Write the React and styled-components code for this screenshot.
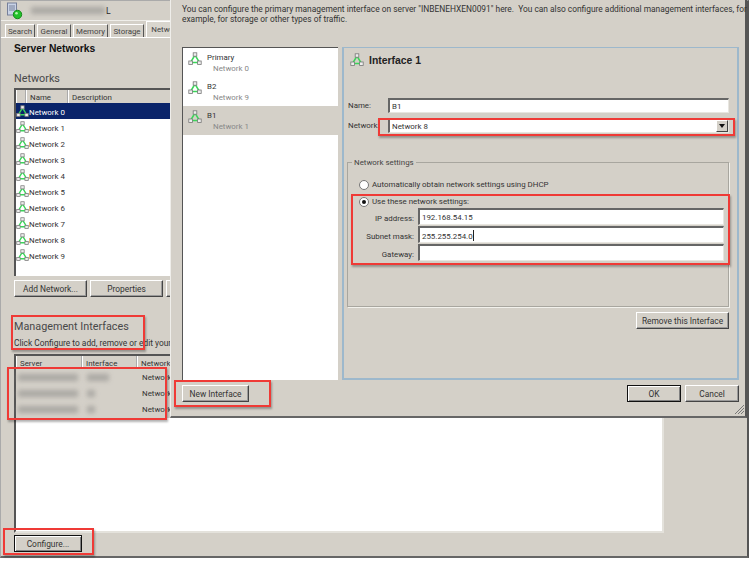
import React from "react";
import styled, { createGlobalStyle } from "styled-components";

const GlobalStyle = createGlobalStyle`
  html, body { margin: 0; padding: 0; background: #fff; }
  body { font-family: Roboto, "Liberation Sans", Arial, sans-serif; font-size: 7.9px; color: #222; }
  * { box-sizing: border-box; }
`;

const Stage = styled.div`
  position: relative;
  width: 751px;
  height: 561px;
  overflow: hidden;
`;

const Window = styled.div`
  display: flex;
  flex-direction: column;
  width: 749px;
  height: 558px;
  background: #d4d0c8;
  border-right: 2px solid #555;
  border-bottom: 2px solid #666;
  border-left: 1px solid #aaa;
  border-top: 1px solid #aaa;
`;

const TitleBar = styled.div`
  display: flex;
  align-items: center;
  gap: 7px;
  height: 20px;
  padding-left: 5px;
  font-size: 8.6px;
  border-bottom: 1px solid #efeeea;
`;

const BlurName = styled.span`
  display: inline-block;
  width: ${(p) => p.$w}px;
  height: 7px;
  margin-right: 1px;
  background: #a09e9a;
  filter: blur(2.5px);
  opacity: 0.8;
`;

const Tabs = styled.div`
  display: flex;
  align-items: flex-end;
  gap: 2px;
  height: 16px;
  padding-left: 4px;
`;

const Tab = styled.div`
  display: flex;
  align-items: center;
  justify-content: center;
  width: ${(p) => p.$w}px;
  height: ${(p) => (p.$active ? 16 : 13)}px;
  background: ${(p) => (p.$active ? "#d9d6ce" : "transparent")};
  border: 1px solid #fff;
  border-right: 1px solid #555;
  border-bottom: none;
  color: #444;
`;

const TabPage = styled.div`
  flex: 1;
  display: flex;
  flex-direction: column;
  min-height: 0;
  padding: 0 13px;
  border-top: 1px solid #fff;
`;

const PageTitle = styled.div`
  margin-top: 4px;
  height: 14px;
  font-family: "Liberation Sans", Arial, sans-serif;
  font-weight: bold;
  font-size: 10.3px;
  line-height: 14px;
  color: #111;
`;

const SectionTitle = styled.div`
  margin-top: ${(p) => p.$mt}px;
  font-size: 10.8px;
  line-height: 16px;
  height: 16px;
  color: #484848;
  white-space: nowrap;
`;

const ListBox = styled.div`
  width: 400px;
  height: ${(p) => p.$h}px;
  margin-top: ${(p) => p.$mt}px;
  background: #fff;
  border-top: 2px solid #555;
  border-left: 2px solid #555;
`;

const HeaderRow = styled.div`
  display: flex;
  height: 13px;
  background: #d4d0c8;
  color: #333;
  line-height: 15px;
`;

const HeaderCell = styled.div`
  width: ${(p) => p.$w}px;
  padding-left: 3px;
  border-right: 1px solid #aaa;
  border-left: 1px solid #fff;
`;

const NetRow = styled.div`
  display: flex;
  align-items: center;
  height: 16px;
  background: ${(p) => (p.$selected ? "#0a246a" : "transparent")};
  color: ${(p) => (p.$selected ? "#fff" : "#333")};
`;

const NetName = styled.span`
  padding-top: 2px;
`;

const ButtonRow = styled.div`
  display: flex;
  gap: 3px;
  margin-top: 4px;
`;

const Button = styled.div`
  display: flex;
  align-items: center;
  justify-content: center;
  flex: none;
  width: ${(p) => p.$w}px;
  height: 17px;
  font-size: 8.4px;
  background: #d4d0c8;
  color: #333;
  border: 1px solid;
  border-color: ${(p) => (p.$default ? "#111" : "#fff #444 #444 #fff")};
  box-shadow: ${(p) => (p.$default ? "inset 1px 1px #fff, inset -1px -1px #808080" : "inset -1px -1px #9a9a9a")};
`;

const HelpText = styled.div`
  margin-top: 1px;
  font-size: 8.4px;
  line-height: 15px;
  color: #333;
  white-space: nowrap;
`;

const MgmtTable = styled.div`
  display: flex;
  flex-direction: column;
  width: 650px;
  height: 179px;
  margin-top: 3px;
  background: #fff;
  border-top: 2px solid #555;
  border-left: 2px solid #555;
  border-right: 2px solid #e4e2dc;
  border-bottom: 2px solid #e4e2dc;
`;

const MgmtRows = styled.div`
  display: flex;
  flex-direction: column;
  height: 49px;
  background: #d4d0c8;
`;

const MgmtRow = styled.div`
  display: flex;
  align-items: center;
  height: 16px;
  padding-left: 2px;
  gap: 8px;
`;

const NetCell = styled.span`
  margin-left: ${(p) => p.$ml}px;
  color: #333;
`;

const Footer = styled.div`
  display: flex;
  margin-top: 2px;
`;

/* dialog sits over the main window */
const Dialog = styled.div`
  position: absolute;
  left: 170px;
  top: 0;
  width: 577px;
  height: 418px;
  display: flex;
  flex-direction: column;
  padding: 4px 6px 0 11px;
  background: #d4d0c8;
  border-left: 1px solid #efeeea;
  border-right: 2px solid #555;
  border-bottom: 2px solid #666;
`;

const Intro = styled.div`
  height: 43px;
  font-size: 8.4px;
  line-height: 10px;
  color: #333;
  white-space: nowrap;
`;

const DialogBody = styled.div`
  display: flex;
  gap: 4px;
  height: 333px;
`;

const SideList = styled.div`
  width: 156px;
  background: #fff;
  border-top: 1px solid #555;
  border-left: 1px solid #555;
`;

const SideItem = styled.div`
  display: flex;
  gap: 5px;
  height: 29px;
  padding: 4px 0 0 5px;
  background: ${(p) => (p.$selected ? "#d4d0c8" : "transparent")};
`;

const SideText = styled.div`
  display: flex;
  flex-direction: column;
  line-height: 11px;
  color: #333;
`;

const SideSub = styled.span`
  padding-left: 6px;
  color: #888;
`;

const DetailPanel = styled.div`
  flex: 1;
  display: flex;
  flex-direction: column;
  padding: 0 8px 0 4px;
  border: 2px solid #9db8cc;
  border-top-width: 1px;
`;

const PanelTitle = styled.div`
  display: flex;
  align-items: center;
  gap: 5px;
  height: 24px;
  padding-left: 2px;
  font-family: "Liberation Sans", Arial, sans-serif;
  font-size: 10.4px;
  font-weight: bold;
  color: #222;
`;

const FieldRow = styled.div`
  display: flex;
  align-items: center;
  height: ${(p) => p.$h || 15}px;
  margin-top: ${(p) => p.$mt || 0}px;
`;

const FieldLabel = styled.div`
  width: ${(p) => p.$w}px;
  flex: none;
  text-align: ${(p) => p.$align || "left"};
  padding-right: ${(p) => p.$pr || 0}px;
  padding-top: ${(p) => p.$pt || 0}px;
  color: #333;
  white-space: nowrap;
`;

const TextInput = styled.div`
  flex: 1;
  display: flex;
  align-items: center;
  justify-content: space-between;
  height: 100%;
  padding-left: 2px;
  background: #fff;
  color: #333;
  border-top: 2px solid #666;
  border-left: 2px solid #666;
  border-right: 1px solid #e8e6e0;
  border-bottom: 1px solid #e8e6e0;
`;

const Caret = styled.span`
  display: inline-block;
  width: 1px;
  height: 11px;
  vertical-align: -2px;
  background: #222;
`;

const ComboArrow = styled.div`
  display: flex;
  align-items: center;
  justify-content: center;
  width: 12px;
  height: 100%;
  background: #d4d0c8;
  border: 1px solid;
  border-color: #fff #444 #444 #fff;
`;

const ArrowGlyph = styled.span`
  width: 0;
  height: 0;
  border-left: 3px solid transparent;
  border-right: 3px solid transparent;
  border-top: 4px solid #111;
`;

const GroupBox = styled.fieldset`
  display: flex;
  flex-direction: column;
  height: 149px;
  margin: 25px 0 0 -1px;
  padding: 9px 4px 0 11px;
  border: 1px solid #a8a69f;
  box-shadow: 1px 1px #f2f1ec;
`;

const GroupLegend = styled.legend`
  margin-left: -7px;
  padding: 0 2px;
  color: #444;
  font-size: 7.9px;
`;

const RadioRow = styled.div`
  display: flex;
  align-items: center;
  gap: 3px;
  height: 16px;
  padding-top: 1px;
  margin-top: ${(p) => p.$mt || 0}px;
  color: #333;
`;

const Radio = styled.span`
  display: flex;
  align-items: center;
  justify-content: center;
  width: 10px;
  height: 10px;
  border-radius: 50%;
  background: #fff;
  border: 1px solid #777;
`;

const RadioDot = styled.span`
  width: 4px;
  height: 4px;
  border-radius: 50%;
  background: #111;
`;

const IpFields = styled.div`
  display: flex;
  flex-direction: column;
  gap: 1px;
  margin-top: -1px;
`;

const RightAction = styled.div`
  display: flex;
  justify-content: flex-end;
  margin-top: 5px;
`;

const DialogFooter = styled.div`
  display: flex;
  align-items: center;
  justify-content: space-between;
  padding-top: 5px;
`;

const FooterRight = styled.div`
  display: flex;
  gap: 4px;
`;

const Grip = styled.svg`
  position: absolute;
  right: 0;
  bottom: 1px;
`;

/* the red marks drawn on top of the screenshot */
const RedMark = styled.div`
  position: absolute;
  left: ${(p) => p.$x}px;
  top: ${(p) => p.$y}px;
  width: ${(p) => p.$w}px;
  height: ${(p) => p.$h}px;
  border: 2px solid #ef3a36;
  box-shadow: 1px 2px 2px rgba(0, 0, 0, 0.3);
`;

const NetIcon = ({ size = 14 }) => (
  <svg width={size} height={size} viewBox="0 0 14 14" style={{ flex: "none" }}>
    <path d="M7 3 L2.5 10.5 H11.5 Z" fill="none" stroke="#3bd65a" strokeWidth="1.5" />
    <rect x="5.2" y="0.8" width="3.6" height="3.4" fill="#eee" stroke="#777" strokeWidth="0.8" />
    <rect x="0.8" y="9" width="3.6" height="3.4" fill="#eee" stroke="#777" strokeWidth="0.8" />
    <rect x="9.6" y="9" width="3.6" height="3.4" fill="#eee" stroke="#777" strokeWidth="0.8" />
  </svg>
);

const ServerIcon = () => (
  <svg width="18" height="18" viewBox="0 0 18 18" style={{ flex: "none" }}>
    <rect x="1.5" y="1" width="9" height="12" fill="#c9d3e6" stroke="#77809a" />
    <path d="M3 4h6M3 6h6M3 8h6" stroke="#77809a" />
    <circle cx="11.5" cy="12.5" r="4.2" fill="#22c02a" stroke="#178a1c" />
    <circle cx="10.5" cy="11.2" r="1.3" fill="#b6f5b0" />
  </svg>
);

const networks = [0, 1, 2, 3, 4, 5, 6, 7, 8, 9];

const tabs = [
  { label: "Search", w: 30 },
  { label: "General", w: 34 },
  { label: "Memory", w: 35 },
  { label: "Storage", w: 34 },
  { label: "Network", w: 40, active: true },
];

const interfaces = [
  { name: "Primary", net: "Network 0" },
  { name: "B2", net: "Network 9" },
  { name: "B1", net: "Network 1", selected: true },
];

const mgmtRows = [
  { w: 60, w2: 22, ml: 24 },
  { w: 60, w2: 8, ml: 38 },
  { w: 60, w2: 8, ml: 38 },
];

const redMarks = [
  { x: 378, y: 118, w: 357, h: 18 },
  { x: 351, y: 194, w: 379, h: 71 },
  { x: 11, y: 315, w: 134, h: 35 },
  { x: 7, y: 367, w: 160, h: 53 },
  { x: 174, y: 380, w: 97, h: 27 },
  { x: 3, y: 528, w: 91, h: 27 },
];

export default function App() {
  return (
    <Stage>
      <GlobalStyle />
      <Window>
        <TitleBar>
          <ServerIcon />
          <span>
            <BlurName $w={74} />L
          </span>
        </TitleBar>
        <Tabs>
          {tabs.map((t) => (
            <Tab key={t.label} $w={t.w} $active={t.active}>
              {t.label}
            </Tab>
          ))}
        </Tabs>
        <TabPage>
          <PageTitle>Server Networks</PageTitle>
          <SectionTitle $mt={15}>Networks</SectionTitle>
          <ListBox $h={188} $mt={1}>
            <HeaderRow>
              <HeaderCell $w={10} />
              <HeaderCell $w={42}>Name</HeaderCell>
              <HeaderCell $w={300}>Description</HeaderCell>
            </HeaderRow>
            {networks.map((n) => (
              <NetRow key={n} $selected={n === 0}>
                <NetIcon size={13} />
                <NetName>Network {n}</NetName>
              </NetRow>
            ))}
          </ListBox>
          <ButtonRow>
            <Button $w={73}>Add Network...</Button>
            <Button $w={73}>Properties</Button>
            <Button $w={73}>Remove</Button>
          </ButtonRow>
          <SectionTitle $mt={22}>Management Interfaces</SectionTitle>
          <HelpText>Click Configure to add, remove or edit your management interfaces.</HelpText>
          <MgmtTable>
            <HeaderRow>
              <HeaderCell $w={66}>Server</HeaderCell>
              <HeaderCell $w={55}>Interface</HeaderCell>
              <HeaderCell $w={80}>Network</HeaderCell>
            </HeaderRow>
            <MgmtRows>
              {mgmtRows.map((r, i) => (
                <MgmtRow key={i}>
                  <BlurName $w={r.w} />
                  <BlurName $w={r.w2} />
                  <NetCell $ml={r.ml}>Network</NetCell>
                </MgmtRow>
              ))}
            </MgmtRows>
          </MgmtTable>
          <Footer>
            <Button $w={68} $default>
              Configure...
            </Button>
          </Footer>
        </TabPage>
      </Window>

      <Dialog>
        <Intro>
          You can configure the primary management interface on server "INBENEHXEN0091" here.&nbsp; You can also configure additional management interfaces, for
          <br />
          example, for storage or other types of traffic.
        </Intro>
        <DialogBody>
          <SideList>
            {interfaces.map((it) => (
              <SideItem key={it.name} $selected={it.selected}>
                <NetIcon />
                <SideText>
                  {it.name}
                  <SideSub>{it.net}</SideSub>
                </SideText>
              </SideItem>
            ))}
          </SideList>
          <DetailPanel>
            <PanelTitle>
              <NetIcon />
              Interface 1
            </PanelTitle>
            <FieldRow $mt={26}>
              <FieldLabel $w={40}>Name:</FieldLabel>
              <TextInput>B1</TextInput>
            </FieldRow>
            <FieldRow $mt={5}>
              <FieldLabel $w={40}>Network:</FieldLabel>
              <TextInput>
                Network 8
                <ComboArrow>
                  <ArrowGlyph />
                </ComboArrow>
              </TextInput>
            </FieldRow>
            <GroupBox>
              <GroupLegend>Network settings</GroupLegend>
              <RadioRow>
                <Radio />
                Automatically obtain network settings using DHCP
              </RadioRow>
              <RadioRow $mt={1}>
                <Radio>
                  <RadioDot />
                </Radio>
                Use these network settings:
              </RadioRow>
              <IpFields>
                <FieldRow $h={17}>
                  <FieldLabel $w={59} $align="right" $pr={4} $pt={3}>
                    IP address:
                  </FieldLabel>
                  <TextInput>192.168.54.15</TextInput>
                </FieldRow>
                <FieldRow $h={17}>
                  <FieldLabel $w={59} $align="right" $pr={4} $pt={3}>
                    Subnet mask:
                  </FieldLabel>
                  <TextInput>
                    <span>
                      255.255.254.0
                      <Caret />
                    </span>
                  </TextInput>
                </FieldRow>
                <FieldRow $h={17}>
                  <FieldLabel $w={59} $align="right" $pr={4} $pt={3}>
                    Gateway:
                  </FieldLabel>
                  <TextInput />
                </FieldRow>
              </IpFields>
            </GroupBox>
            <RightAction>
              <Button $w={93}>Remove this Interface</Button>
            </RightAction>
          </DetailPanel>
        </DialogBody>
        <DialogFooter>
          <Button $w={67}>New Interface</Button>
          <FooterRight>
            <Button $w={54} $default>
              OK
            </Button>
            <Button $w={54}>Cancel</Button>
          </FooterRight>
        </DialogFooter>
        <Grip width="11" height="11" viewBox="0 0 11 11">
          <path d="M1 10 L10 1 M4 10 L10 4 M7 10 L10 7" stroke="#777" strokeWidth="1" />
        </Grip>
      </Dialog>

      {redMarks.map((m, i) => (
        <RedMark key={i} $x={m.x} $y={m.y} $w={m.w} $h={m.h} />
      ))}
    </Stage>
  );
}
